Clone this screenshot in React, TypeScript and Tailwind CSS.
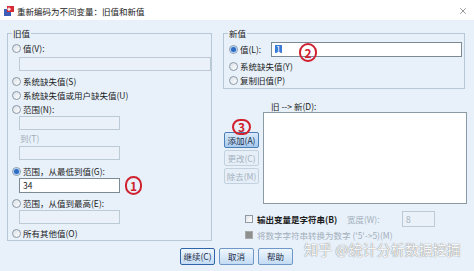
import { X } from "lucide-react"

const font = "font-['Noto_Sans_CJK_SC','Noto_Sans',sans-serif]"

function Radio({ checked }: { checked?: boolean }) {
  return (
    <span className="w-[9px] h-[9px] rounded-full border border-[#8a97a6] bg-linear-to-br from-[#d9dfe6] to-white flex items-center justify-center shrink-0">
      {checked && <span className="w-[5px] h-[5px] rounded-full bg-[#2d6cc2] ring-1 ring-[#a9c9ee]" />}
    </span>
  )
}

function RadioRow({ label, checked, className = "" }: { label: string; checked?: boolean; className?: string }) {
  return (
    <div className={`flex items-center gap-[2px] h-[14px] ${className}`}>
      <Radio checked={checked} />
      <span className="text-[#1b1b1b] leading-none">{label}</span>
    </div>
  )
}

function Field({ className = "", active, children }: { className?: string; active?: boolean; children?: React.ReactNode }) {
  return (
    <div
      className={`h-[14px] border flex items-center px-[3px] ${
        active ? "bg-white border-[#7c8a96]" : "bg-[#eaf1f8] border-[#bccad6]"
      } ${className}`}
    >
      {children}
    </div>
  )
}

function Mark({ n, className = "" }: { n: string; className?: string }) {
  return (
    <div
      className={`rounded-full border-[2px] border-[#d0212e] text-[#d0212e] font-bold text-[12px] leading-none flex items-center justify-center ${className}`}
    >
      {n}
    </div>
  )
}

function SideButton({ label, enabled }: { label: string; enabled?: boolean }) {
  return (
    <div
      className={`w-[35px] h-[16px] rounded-[2px] border flex items-center justify-center leading-none ${
        enabled
          ? "border-[#4b7fb6] bg-linear-to-b from-[#d9eafb] to-[#a6caef] text-[#1b2b44]"
          : "border-[#c3d1de] bg-[#e6eef7] text-[#a4b2c0]"
      }`}
    >
      {label}
    </div>
  )
}

function DialogButton({ label, primary }: { label: string; primary?: boolean }) {
  return (
    <div
      className={`w-[35px] h-[17px] rounded-[2px] border flex items-center justify-center leading-none text-[#1b2b44] bg-linear-to-b from-[#eef6fe] to-[#c4dcf4] ${
        primary ? "border-[#2f64a8]" : "border-[#6f98c6]"
      }`}
    >
      {label}
    </div>
  )
}

export default function App() {
  return (
    <div className={`relative w-[474px] h-[271px] bg-[#e8f1fa] flex flex-col overflow-hidden text-[8.5px] ${font}`}>
      {/* Title bar */}
      <div className="h-[20px] bg-white flex items-center pl-[4px] pr-[6px] pt-[2px] shrink-0">
        <svg width="10" height="10" viewBox="0 0 10 10" className="shrink-0">
          <rect x="0" y="3" width="7" height="7" fill="#3c5fb5" />
          <rect x="3" y="0" width="7" height="6" fill="#d62a35" />
          <path d="M5 1.5v3.5M3.3 3.2h3.5" stroke="#fff" strokeWidth="1.2" />
        </svg>
        <span className="ml-[3px] text-[#1b1b1b] leading-none">重新编码为不同变量：旧值和新值</span>
        <X size={10} strokeWidth={1.2} className="ml-auto text-[#333]" />
      </div>

      {/* Body */}
      <div className="flex flex-col px-[7px] pt-[7px]">
        <div className="flex">
          {/* Old value */}
          <fieldset className="w-[206px] border border-[#b7c8d8]">
            <legend className="ml-[4px] px-[1px] leading-[12px] text-[#1b1b1b]">旧值</legend>
            <div className="flex flex-col pl-[4px] pt-[2px]">
              <RadioRow label="值(V):" />
              <Field className="ml-[7px] mt-[2px] w-[192px]" />
              <RadioRow label="系统缺失值(S)" className="mt-[3px]" />
              <RadioRow label="系统缺失值或用户缺失值(U)" />
              <RadioRow label="范围(N):" />
              <Field className="ml-[7px] w-[101px]" />
              <div className="ml-[8px] mt-[2px] h-[13px] flex items-center text-[#a0acb8] leading-none">到(T)</div>
              <Field className="ml-[7px] mt-[1px] w-[101px]" />
              <RadioRow label="范围，从最低到值(G):" checked className="mt-[4px]" />
              <div className="flex items-center h-[15px]">
                <Field active className="ml-[7px] w-[101px] h-[15px]">
                  <span className="text-[#1b1b1b] leading-none">34</span>
                </Field>
                <Mark n="1" className="ml-[5px] w-[17px] h-[19px]" />
              </div>
              <RadioRow label="范围，从值到最高(E):" className="mt-[3px]" />
              <Field className="ml-[7px] w-[101px]" />
              <RadioRow label="所有其他值(O)" className="mt-[2px]" />
            </div>
          </fieldset>

          {/* New value and mapping */}
          <div className="w-[244px] ml-[11px] flex flex-col">
            <fieldset className="w-[242px] border border-[#b7c8d8]">
              <legend className="ml-[4px] px-[1px] leading-[12px] text-[#1b1b1b]">新值</legend>
              <div className="flex flex-col pl-[5px] pr-[2px] pt-[2px] pb-[1px]">
                <div className="flex items-center h-[16px]">
                  <Radio checked />
                  <span className="ml-[2px] text-[#1b1b1b] leading-none">值(L):</span>
                  <Field active className="ml-auto w-[191px] h-[15px] px-[1px]">
                    <span className="bg-[#3b7bd6] text-white leading-none px-[1px]">1</span>
                  </Field>
                </div>
                <RadioRow label="系统缺失值(Y)" className="mt-[2px]" />
                <RadioRow label="复制旧值(P)" />
              </div>
            </fieldset>

            <div className="flex mt-[12px]">
              <div className="w-[36px] pl-[1px] pt-[31px] flex flex-col gap-[2px]">
                <SideButton label="添加(A)" enabled />
                <SideButton label="更改(C)" />
                <SideButton label="除去(M)" />
              </div>
              <div className="ml-[4px] flex flex-col">
                <div className="ml-[8px] h-[11px] flex items-center text-[#1b1b1b] leading-none">旧 --&gt; 新(D):</div>
                <div className="w-[204px] h-[92px] bg-white border border-[#8c9aa5]" />
              </div>
            </div>

            <div className="flex items-center h-[16px] mt-[7px] pl-[22px]">
              <span className="w-[8px] h-[8px] border border-[#8e9aa6] bg-linear-to-br from-[#e1e5ea] to-white shrink-0" />
              <span className="ml-[4px] w-[90px] font-bold text-[#1b1b1b] leading-none">输出变量是字符串(B)</span>
              <span className="w-[55px] text-[#a3afbb] leading-none">宽度(W):</span>
              <Field className="w-[33px] h-[16px]">
                <span className="text-[#a3afbb] leading-none">8</span>
              </Field>
            </div>
            <div className="flex items-center h-[12px] mt-[2px] pl-[22px]">
              <span className="w-[8px] h-[8px] border border-[#a9a9a9] bg-[#8f8f8f] shrink-0" />
              <span className="ml-[4px] text-[#a3afbb] leading-none">将数字字符串转换为数字 ('5'-&gt;5)(M)</span>
            </div>
          </div>
        </div>

        {/* Dialog buttons */}
        <div className="flex gap-[4px] mt-[7px] ml-[173px]">
          <DialogButton label="继续(C)" primary />
          <DialogButton label="取消" />
          <DialogButton label="帮助" />
        </div>
      </div>

      {/* Annotations and watermark */}
      <Mark n="2" className="absolute left-[299px] top-[43px] w-[18px] h-[19px]" />
      <Mark n="3" className="absolute left-[232px] top-[119px] w-[19px] h-[16px]" />
      <div className="absolute left-[304px] top-[242px] text-[14px] leading-none text-[#f7f7f7] [text-shadow:0_0_1px_#8a8a8a,0_0_1px_#9a9a9a]">
        知乎 @统计分析数据挖掘
      </div>
    </div>
  )
}
